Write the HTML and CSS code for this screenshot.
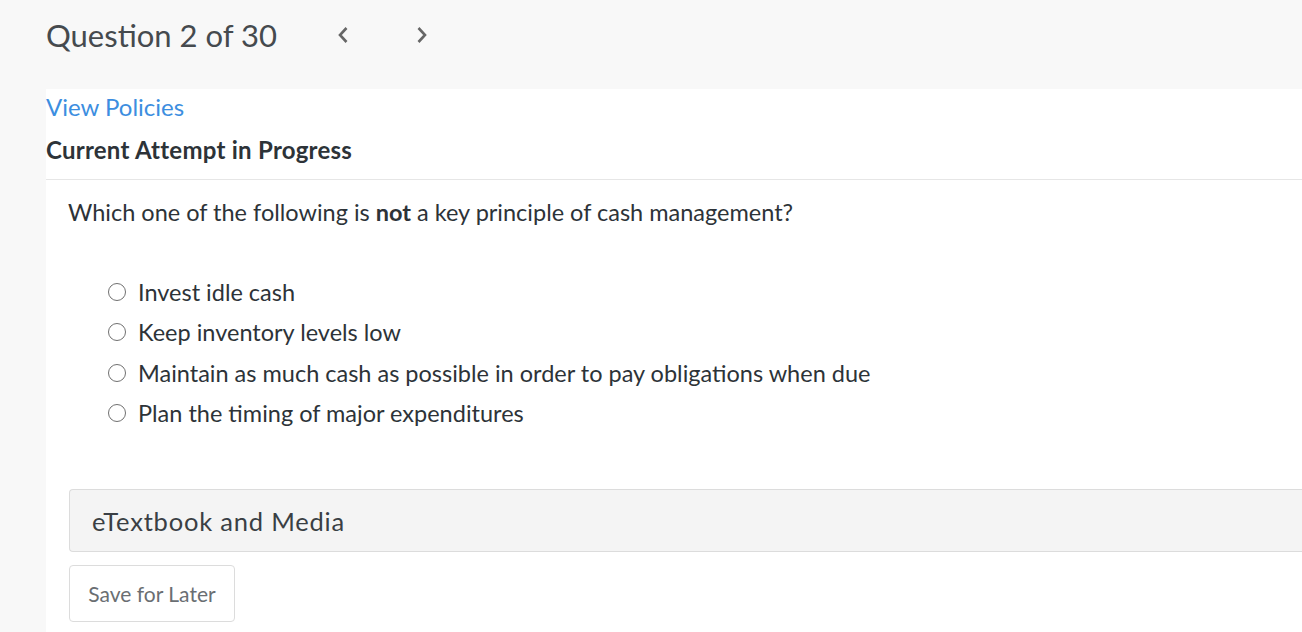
FILE: index.html
```html
<!DOCTYPE html>
<html lang="en">
<head>
    <meta charset="UTF-8">
    <title>Question 2 of 30</title>
    <link rel="stylesheet" href="styles.css">
</head>
<body>
    <div class="topbar">
        <h1 class="q-count">Question 2 of 30</h1>
        <div class="nav">
            <button class="nav-btn" aria-label="Previous">
                <svg width="12" height="18" viewBox="0 0 12 18"><path d="M9.5 2 L3 9 L9.5 16" fill="none" stroke="#666" stroke-width="2.6"/></svg>
            </button>
            <button class="nav-btn" aria-label="Next">
                <svg width="12" height="18" viewBox="0 0 12 18"><path d="M2.5 2 L9 9 L2.5 16" fill="none" stroke="#666" stroke-width="2.6"/></svg>
            </button>
        </div>
    </div>

    <div class="page">
        <div class="content">
            <a class="policies" href="#">View Policies</a>
            <h2 class="attempt">Current Attempt in Progress</h2>

            <div class="question">
                <p class="prompt">Which one of the following is <strong>not</strong> a key principle of cash management?</p>

                <ul class="options">
                    <li><span class="radio"></span>Invest idle cash</li>
                    <li><span class="radio"></span>Keep inventory levels low</li>
                    <li><span class="radio"></span>Maintain as much cash as possible in order to pay obligations when due</li>
                    <li><span class="radio"></span>Plan the timing of major expenditures</li>
                </ul>

                <div class="media-box">eTextbook and Media</div>

                <button class="save-btn">Save for Later</button>
            </div>
        </div>
    </div>
</body>
</html>
```

FILE: styles.css
```css
* {
    margin: 0;
    padding: 0;
    box-sizing: border-box;
}

body {
    font-family: Lato, "Open Sans", sans-serif;
    color: #2d3338;
    background: #f8f8f8;
    height: 632px;
    overflow: hidden;
}

.topbar {
    height: 89px;
    background: #f8f8f8;
    display: flex;
    align-items: flex-start;
    padding: 15px 0 0 46px;
}

.q-count {
    font-size: 31px;
    font-weight: 400;
    color: #454a4e;
    line-height: 40px;
}

.nav {
    display: flex;
    gap: 55px;
    margin-left: 54px;
    padding-top: 9px;
}

.nav-btn {
    background: none;
    border: none;
    width: 24px;
    height: 22px;
    display: flex;
    align-items: center;
    justify-content: center;
}

.page {
    padding-left: 46px;
}

.content {
    background: #fff;
    height: 543px;
}

.policies {
    display: block;
    color: #3c8ee0;
    text-decoration: none;
    font-size: 24px;
    line-height: 36px;
}

.attempt {
    font-size: 24px;
    font-weight: 700;
    line-height: 32px;
    letter-spacing: 0.25px;
    margin-top: 9px;
    padding-bottom: 13px;
    border-bottom: 1px solid #e6e6e6;
}

.question {
    padding: 16px 0 0 22px;
}

.prompt {
    font-size: 23.5px;
    line-height: 32px;
}

.options {
    list-style: none;
    margin-top: 44px;
    padding-left: 40px;
}

.options li {
    display: flex;
    align-items: center;
    font-size: 23.5px;
    line-height: 40.3px;
    height: 40.3px;
}

.radio {
    width: 18px;
    height: 18px;
    border: 1px solid #707070;
    border-radius: 50%;
    margin-right: 12px;
    flex-shrink: 0;
}

.media-box {
    margin: 56px 0 0 1px;
    background: #f4f4f4;
    border: 1px solid #dcdcdc;
    border-right: none;
    border-radius: 4px 0 0 4px;
    height: 63px;
    padding: 0 22px;
    display: flex;
    align-items: center;
    font-size: 25.5px;
    letter-spacing: 0.8px;
    color: #3a3f44;
}

.save-btn {
    margin: 13px 0 0 1px;
    background: #fff;
    border: 1px solid #dcdcdc;
    border-radius: 4px;
    width: 166px;
    height: 57px;
    font-family: Lato, "Open Sans", sans-serif;
    font-size: 21px;
    color: #6a6e72;
}
```
